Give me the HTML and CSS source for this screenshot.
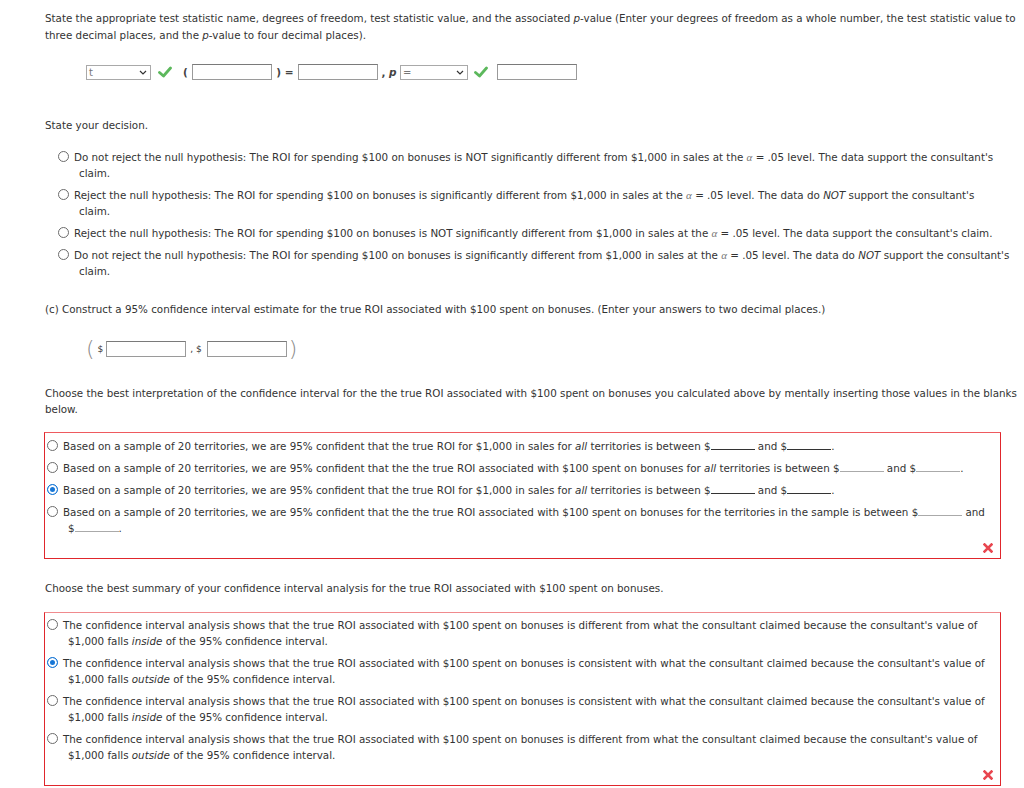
FILE: index.html
```html
<!DOCTYPE html>
<html>
<head>
<meta charset="utf-8">
<link rel="stylesheet" href="styles.css">
</head>
<body>
<div class="page">
  <p class="intro">State the appropriate test statistic name, degrees of freedom, test statistic value, and the associated <i>p</i>-value (Enter your degrees of freedom as a whole number, the test statistic value to three decimal places, and the <i>p</i>-value to four decimal places).</p>

  <div class="stat-row">
    <span class="sel sel-t"><span class="sel-val">t</span><svg class="chev" viewBox="0 0 8 5" width="8" height="5"><path d="M1 1 L4 4 L7 1" fill="none" stroke="#333" stroke-width="1.2"/></svg></span>
    <svg class="check check-one" viewBox="0 0 14 12" width="14" height="12"><path d="M1.5 6.5 L5.5 10 L12.5 2" fill="none" stroke="#5cb85c" stroke-width="2.8" stroke-linecap="round" stroke-linejoin="round"/></svg>
    <b class="sym sym-open">(</b>
    <input class="field" type="text">
    <b class="sym sym-eq">) =</b>
    <input class="field" type="text">
    <b class="sym sym-p">, <i>p</i></b>
    <span class="sel sel-p"><span class="sel-val">=</span><svg class="chev" viewBox="0 0 8 5" width="8" height="5"><path d="M1 1 L4 4 L7 1" fill="none" stroke="#333" stroke-width="1.2"/></svg></span>
    <svg class="check check-two" viewBox="0 0 14 12" width="14" height="12"><path d="M1.5 6.5 L5.5 10 L12.5 2" fill="none" stroke="#5cb85c" stroke-width="2.8" stroke-linecap="round" stroke-linejoin="round"/></svg>
    <input class="field field-last" type="text">
  </div>

  <p class="decision-title">State your decision.</p>
  <ul class="choices decision">
    <li><span class="radio"></span>Do not reject the null hypothesis: The ROI for spending $100 on bonuses is NOT significantly different from $1,000 in sales at the <i class="alpha">α</i> = .05 level. The data support the consultant's claim.</li>
    <li><span class="radio"></span>Reject the null hypothesis: The ROI for spending $100 on bonuses is significantly different from $1,000 in sales at the <i class="alpha">α</i> = .05 level. The data do <i>NOT</i> support the consultant's<br>claim.</li>
    <li><span class="radio"></span>Reject the null hypothesis: The ROI for spending $100 on bonuses is NOT significantly different from $1,000 in sales at the <i class="alpha">α</i> = .05 level. The data support the consultant's claim.</li>
    <li><span class="radio"></span>Do not reject the null hypothesis: The ROI for spending $100 on bonuses is significantly different from $1,000 in sales at the <i class="alpha">α</i> = .05 level. The data do <i>NOT</i> support the consultant's claim.</li>
  </ul>

  <p class="part-c">(c) Construct a 95% confidence interval estimate for the true ROI associated with $100 spent on bonuses. (Enter your answers to two decimal places.)</p>

  <div class="ci-row">
    <span class="paren">(</span>
    <span class="dollar">$</span>
    <input class="field" type="text">
    <span class="comma">, $</span>
    <input class="field" type="text">
    <span class="paren paren-close">)</span>
  </div>

  <p class="interp-title">Choose the best interpretation of the confidence interval for the the true ROI associated with $100 spent on bonuses you calculated above by mentally inserting those values in the blanks below.</p>

  <div class="answer-box box-one">
    <ul class="choices boxed">
      <li><span class="radio"></span>Based on a sample of 20 territories, we are 95% confident that the true ROI for $1,000 in sales for <i>all</i> territories is between <span class="amt">$<span class="blank"></span></span> and <span class="amt">$<span class="blank"></span>.</span></li>
      <li><span class="radio"></span>Based on a sample of 20 territories, we are 95% confident that the the true ROI associated with $100 spent on bonuses for <i>all</i> territories is between <span class="amt">$<span class="blank light"></span></span> and <span class="amt">$<span class="blank light"></span>.</span></li>
      <li><span class="radio checked"></span>Based on a sample of 20 territories, we are 95% confident that the true ROI for $1,000 in sales for <i>all</i> territories is between <span class="amt">$<span class="blank"></span></span> and <span class="amt">$<span class="blank"></span>.</span></li>
      <li><span class="radio"></span>Based on a sample of 20 territories, we are 95% confident that the the true ROI associated with $100 spent on bonuses for the territories in the sample is between <span class="amt">$<span class="blank light"></span></span> and <span class="amt">$<span class="blank light"></span>.</span></li>
    </ul>
    <div class="wrong"><svg viewBox="0 0 10 10" width="10" height="10"><path d="M1.5 1.5 L8.5 8.5 M8.5 1.5 L1.5 8.5" stroke="#e8464f" stroke-width="2.6" stroke-linecap="square"/></svg></div>
  </div>

  <p class="summary-title">Choose the best summary of your confidence interval analysis for the true ROI associated with $100 spent on bonuses.</p>

  <div class="answer-box box-two">
    <ul class="choices boxed">
      <li><span class="radio"></span>The confidence interval analysis shows that the true ROI associated with $100 spent on bonuses is different from what the consultant claimed because the consultant's value of $1,000 falls <i>inside</i> of the 95% confidence interval.</li>
      <li><span class="radio checked"></span>The confidence interval analysis shows that the true ROI associated with $100 spent on bonuses is consistent with what the consultant claimed because the consultant's value of $1,000 falls <i>outside</i> of the 95% confidence interval.</li>
      <li><span class="radio"></span>The confidence interval analysis shows that the true ROI associated with $100 spent on bonuses is consistent with what the consultant claimed because the consultant's value of $1,000 falls <i>inside</i> of the 95% confidence interval.</li>
      <li><span class="radio"></span>The confidence interval analysis shows that the true ROI associated with $100 spent on bonuses is different from what the consultant claimed because the consultant's value of $1,000 falls <i>outside</i> of the 95% confidence interval.</li>
    </ul>
    <div class="wrong"><svg viewBox="0 0 10 10" width="10" height="10"><path d="M1.5 1.5 L8.5 8.5 M8.5 1.5 L1.5 8.5" stroke="#e8464f" stroke-width="2.6" stroke-linecap="square"/></svg></div>
  </div>
</div>
</body>
</html>
```

FILE: styles.css
```css
html, body {
  margin: 0;
  padding: 0;
  background: #fff;
}

.page {
  width: 975px;
  padding-left: 45px;
  font-family: "DejaVu Sans", Verdana, sans-serif;
  font-size: 10.34px;
  line-height: 16px;
  color: #333;
}

p {
  margin: 0;
}

.intro {
  margin-top: 10px;
  line-height: 17px;
}

.stat-row {
  display: flex;
  align-items: center;
  height: 18px;
  margin-top: 19px;
  margin-left: 41px;
}

.sel {
  display: inline-flex;
  align-items: center;
  justify-content: space-between;
  box-sizing: border-box;
  height: 15px;
  border: 1px solid #a9a9a9;
  background: #fff;
  padding: 0 3px 0 2px;
  color: #777;
  font-size: 10px;
  line-height: 13px;
  flex: none;
}

.sel-t {
  width: 65px;
}

.sel-p {
  width: 68px;
}

.chev {
  display: block;
}

.check {
  display: block;
  flex: none;
}

.check-one {
  margin-left: 7px;
}

.check-two {
  margin-left: 6px;
}

.sym {
  display: inline-block;
  flex: none;
  font-weight: bold;
  color: #444;
  font-size: 10.5px;
  white-space: nowrap;
}

.sym-open {
  width: 9px;
  margin-left: 11px;
}

.sym-eq {
  width: 26px;
  text-align: center;
}

.sym-p {
  width: 22px;
  text-align: center;
}

.field {
  box-sizing: border-box;
  flex: none;
  width: 80px;
  height: 16px;
  margin: 0;
  padding: 0;
  border: 1px solid #9a9a9a;
  border-top-color: #7a7a7a;
  background: #fff;
  font: inherit;
}

.field-last {
  margin-left: 9px;
}

.decision-title {
  margin-top: 36px;
}

.choices {
  list-style: none;
  margin: 0;
  padding: 0;
}

.choices li {
  text-indent: -21px;
  margin-bottom: 6px;
}

.choices li:last-child {
  margin-bottom: 0;
}

.decision {
  margin-top: 16px;
  padding-left: 34px;
}

.radio {
  display: inline-block;
  box-sizing: border-box;
  width: 11px;
  height: 11px;
  border: 1px solid #6b6b6b;
  border-radius: 50%;
  background: #fff;
  vertical-align: -1px;
  margin-right: 5px;
  text-indent: 0;
}

.radio.checked {
  border-color: #1877d6;
  background: #1877d6;
  box-shadow: inset 0 0 0 2px #fff;
}

.alpha {
  font-family: "Liberation Serif", serif;
  font-size: 11px;
  color: #777;
}

.part-c {
  margin-top: 22px;
}

.ci-row {
  display: flex;
  align-items: center;
  height: 20px;
  margin-top: 22px;
  margin-left: 41px;
}

.paren {
  font-family: "DejaVu Sans", sans-serif;
  font-size: 22px;
  font-weight: 300;
  color: #8a8a8a;
  line-height: 20px;
}

.dollar {
  margin: 0 3px 0 3px;
  font-size: 9px;
}

.comma {
  margin: 0 5px 0 4px;
  font-size: 9px;
}

.paren-close {
  margin-left: 2px;
}

.interp-title {
  margin-top: 26px;
}

.answer-box {
  box-sizing: border-box;
  width: 957px;
  margin-left: -1px;
  border: 1px solid #e0262c;
  border-top-color: #ee5a5f;
}

.box-one {
  margin-top: 15px;
  padding: 5px 5px 0 0;
}

.box-two {
  margin-top: 16px;
  padding: 4px 9px 0 0;
  border-top-color: #f08a8d;
}

.boxed {
  padding-left: 23px;
}

.boxed .radio {
  margin-right: 5px;
}

.amt {
  white-space: nowrap;
  text-indent: 0;
}

.blank {
  display: inline-block;
  width: 44px;
  height: 9px;
  border-bottom: 1px solid #333;
  vertical-align: 0;
  text-indent: 0;
}

.blank.light {
  border-bottom-color: #aaa;
}

.wrong {
  display: flex;
  justify-content: flex-end;
  margin-top: 7px;
  padding: 0 2px 5px 0;
}

.box-two .wrong {
  padding-right: 0;
  margin-right: -2px;
}

.wrong svg {
  display: block;
}

.summary-title {
  margin-top: 21px;
}
```
